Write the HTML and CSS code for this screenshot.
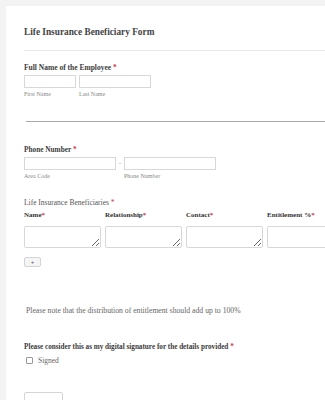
FILE: index.html
```html
<!DOCTYPE html>
<html lang="en">
<head>
    <meta charset="UTF-8">
    <meta name="viewport" content="width=device-width, initial-scale=1.0">
    <title>Life Insurance Beneficiary Form</title>
    <link rel="stylesheet" href="styles.css">
</head>
<body>

    <div class="form-card">
        <h1 class="form-title">Life Insurance Beneficiary Form</h1>

        <div class="field first-field">
            <label class="field-label">Full Name of the Employee <span class="req">*</span></label>
            <div class="name-row">
                <div class="sub">
                    <input type="text" class="input name-first">
                    <span class="sublabel">First Name</span>
                </div>
                <div class="sub">
                    <input type="text" class="input name-last">
                    <span class="sublabel">Last Name</span>
                </div>
            </div>
        </div>

        <hr class="divider">

        <div class="field phone-field">
            <label class="field-label">Phone Number <span class="req">*</span></label>
            <div class="phone-row">
                <div class="sub">
                    <input type="text" class="input phone-input">
                    <span class="sublabel">Area Code</span>
                </div>
                <span class="dash">-</span>
                <div class="sub">
                    <input type="text" class="input phone-input">
                    <span class="sublabel">Phone Number</span>
                </div>
            </div>
        </div>

        <div class="field table-field">
            <label class="small-label">Life Insurance Beneficiaries <span class="req">*</span></label>
            <div class="grid">
                <div class="col-head">Name<span class="req">*</span></div>
                <div class="col-head">Relationship<span class="req">*</span></div>
                <div class="col-head">Contact<span class="req">*</span></div>
                <div class="col-head">Entitlement %<span class="req">*</span></div>
                <textarea class="cell"></textarea>
                <textarea class="cell"></textarea>
                <textarea class="cell"></textarea>
                <textarea class="cell"></textarea>
            </div>
            <button class="add-btn">+</button>
        </div>

        <p class="note">Please note that the distribution of entitlement should add up to 100%</p>

        <div class="field sign-field">
            <label class="field-label">Please consider this as my digital signature for the details provided <span class="req">*</span></label>
            <label class="check">
                <span class="box"></span>
                <span>Signed</span>
            </label>
        </div>

        <button class="submit-btn">Submit</button>
    </div>

</body>
</html>
```

FILE: styles.css
```css
* {
    box-sizing: border-box;
    margin: 0;
    padding: 0;
}

html {
    overflow: hidden;
}

body {
    font-family: "Liberation Serif", serif;
    background-color: #f3f3f3;
    padding: 6px 0 0 6px;
    width: 400px;
    color: #3c3c3c;
}

.form-card {
    background-color: #fff;
    padding: 21px 0 40px 18px;
}

.form-title {
    font-size: 9.3px;
    line-height: 11px;
    font-weight: bold;
    color: #444;
    padding-bottom: 12px;
    border-bottom: 1px solid #e8e8e8;
}

.field-label {
    display: block;
    font-size: 7.5px;
    line-height: 9px;
    font-weight: bold;
    color: #3c3c3c;
    margin-bottom: 3px;
}

.req {
    color: #d0374e;
}

.first-field {
    margin-top: 12px;
}

.name-row {
    display: flex;
    gap: 3px;
}

.phone-row {
    display: flex;
}

.sub {
    display: flex;
    flex-direction: column;
}

.input {
    height: 13px;
    border: 1px solid #d8d8d8;
    background: #fff;
}

.name-first {
    width: 52px;
}

.name-last {
    width: 72px;
}

.phone-input {
    width: 92px;
}

.sublabel {
    font-size: 6px;
    line-height: 7px;
    color: #888;
    margin-top: 3px;
}

.dash {
    font-size: 7px;
    color: #999;
    padding-top: 2px;
    width: 8px;
    text-align: center;
}

.divider {
    border: none;
    border-top: 1px solid #aaa;
    margin: 23px 0 0 2px;
}

.phone-field {
    margin-top: 23px;
}

.phone-field .field-label {
    font-size: 7.3px;
    margin-bottom: 3px;
}

.table-field {
    margin-top: 18px;
}

.small-label {
    display: block;
    font-size: 7.5px;
    line-height: 9px;
    color: #555;
}

.grid {
    display: grid;
    grid-template-columns: repeat(4, 77px);
    column-gap: 4px;
    margin-top: 4px;
}

.col-head {
    font-size: 7px;
    line-height: 8px;
    font-weight: bold;
    color: #333;
    height: 15px;
}

.cell {
    height: 22px;
    border: 1px solid #d8d8d8;
    border-radius: 2px;
    resize: vertical;
}

.add-btn {
    display: block;
    margin-top: 9px;
    width: 17px;
    height: 10px;
    font-size: 6px;
    line-height: 8px;
    color: #555;
    background: #f5f5f5;
    border: 1px solid #d4d4d4;
    border-radius: 2px;
}

.note {
    font-size: 7.7px;
    line-height: 9px;
    color: #666;
    margin: 39px 0 0 2px;
}

.sign-field {
    margin-top: 28px;
}

.sign-field .field-label {
    font-size: 7.2px;
    line-height: 8px;
    margin-bottom: 5px;
}

.check {
    display: flex;
    align-items: center;
    gap: 5px;
    font-size: 7.5px;
    line-height: 9px;
    color: #666;
    padding-left: 2px;
}

.box {
    width: 7px;
    height: 7px;
    border: 1px solid #999;
    border-radius: 1px;
}

.submit-btn {
    margin-top: 27px;
    width: 39px;
    height: 24px;
    font-family: "Liberation Serif", serif;
    font-size: 7px;
    color: #444;
    border: 1px solid #d4d4d4;
    background: #fff;
    border-radius: 2px;
}
```
